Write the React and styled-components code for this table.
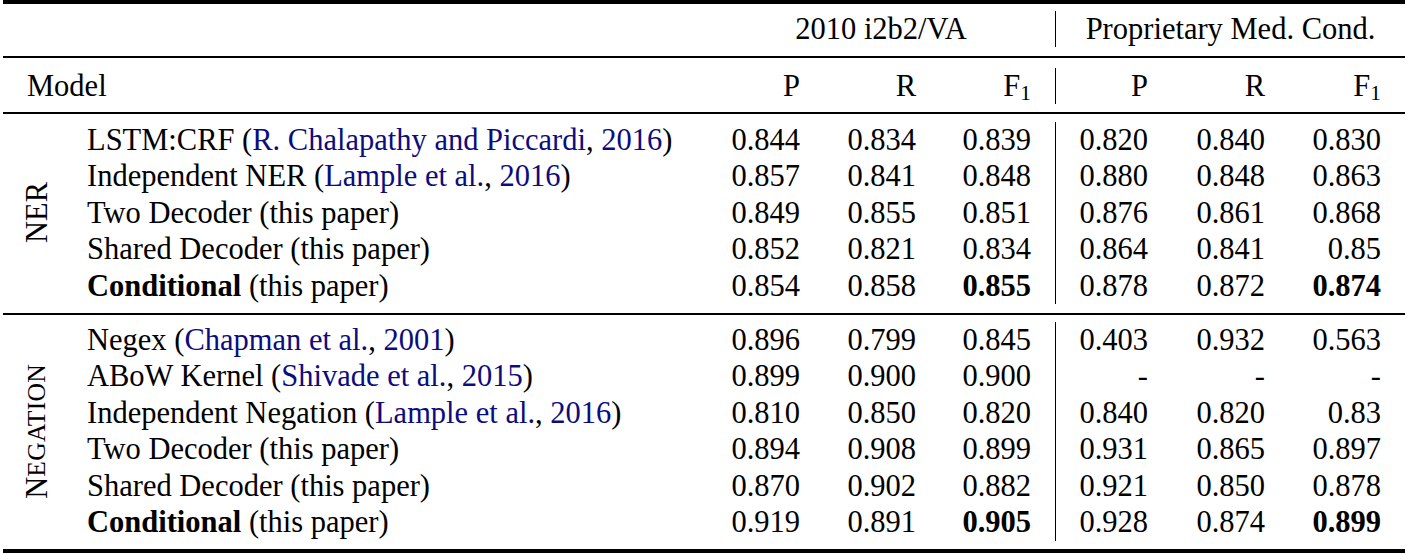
import React from 'react';
import styled, { createGlobalStyle } from 'styled-components';

const GlobalStyle = createGlobalStyle`
  html, body {
    margin: 0;
    padding: 0;
    background: #ffffff;
  }
  body {
    font-family: "Liberation Serif", "Times New Roman", serif;
    color: #000;
  }
`;

const COLUMNS = '84px 620px 117px 116px 115px 117px 117px 116px';

const Table = styled.div`
  width: 1402px;
  margin-left: 3px;
  border-top: 4px solid #000;
  font-size: 30.5px;
`;

const Section = styled.div`
  display: grid;
  grid-template-columns: ${COLUMNS};
  grid-auto-rows: ${(p) => p.$line || 36.5}px;
  line-height: ${(p) => p.$line || 36.5}px;
  padding-top: ${(p) => p.$top}px;
  padding-bottom: ${(p) => p.$bottom}px;
  border-bottom: ${(p) => p.$rule}px solid #000;
`;

const Cell = styled.div`
  white-space: nowrap;
  text-align: ${(p) => p.$align || 'right'};
  padding-right: ${(p) => (p.$align === 'left' ? 0 : 24)}px;
  padding-left: ${(p) => p.$indent || 0}px;
  font-weight: ${(p) => (p.$bold ? 700 : 400)};
  border-left: ${(p) => (p.$divider ? '1.5px solid #000' : 'none')};
  grid-column: ${(p) => p.$span || 'auto'};
`;

const SpanHead = styled.div`
  white-space: nowrap;
  text-align: center;
  padding: 0 24px;
  grid-column: ${(p) => p.$span};
  border-left: ${(p) => (p.$divider ? '1.5px solid #000' : 'none')};
`;

const GroupLabel = styled.div`
  grid-column: 1;
  grid-row: 1 / span ${(p) => p.$rows};
  align-self: center;
  justify-self: start;
  margin-left: 16px;
  writing-mode: vertical-rl;
  transform: rotate(180deg);
  line-height: 36.5px;
  white-space: nowrap;
`;

const SmallCaps = styled.span`
  font-size: 0.84em;
  text-transform: uppercase;
  letter-spacing: 0.01em;
`;

const ModelName = styled.div`
  grid-column: 2;
  white-space: nowrap;
`;

const Bold = styled.span`
  font-weight: 700;
`;

const Cite = styled.span`
  color: #0c0c7e;
`;

const Sub = styled.sub`
  font-size: 0.7em;
  line-height: 0;
  vertical-align: -0.2em;
`;

const F1 = () => (
  <>
    F<Sub>1</Sub>
  </>
);

const NER = [
  { model: 'LSTM:CRF', cite: ['R. Chalapathy and Piccardi', '2016'], v: ['0.844', '0.834', '0.839', '0.820', '0.840', '0.830'] },
  { model: 'Independent NER', cite: ['Lample et al.', '2016'], v: ['0.857', '0.841', '0.848', '0.880', '0.848', '0.863'] },
  { model: 'Two Decoder', v: ['0.849', '0.855', '0.851', '0.876', '0.861', '0.868'] },
  { model: 'Shared Decoder', v: ['0.852', '0.821', '0.834', '0.864', '0.841', '0.85'] },
  { model: 'Conditional', strong: true, v: ['0.854', '0.858', '0.855', '0.878', '0.872', '0.874'], best: [2, 5] },
];

const NEGATION = [
  { model: 'Negex', cite: ['Chapman et al.', '2001'], v: ['0.896', '0.799', '0.845', '0.403', '0.932', '0.563'] },
  { model: 'ABoW Kernel', cite: ['Shivade et al.', '2015'], v: ['0.899', '0.900', '0.900', '-', '-', '-'] },
  { model: 'Independent Negation', cite: ['Lample et al.', '2016'], v: ['0.810', '0.850', '0.820', '0.840', '0.820', '0.83'] },
  { model: 'Two Decoder', v: ['0.894', '0.908', '0.899', '0.931', '0.865', '0.897'] },
  { model: 'Shared Decoder', v: ['0.870', '0.902', '0.882', '0.921', '0.850', '0.878'] },
  { model: 'Conditional', strong: true, v: ['0.919', '0.891', '0.905', '0.928', '0.874', '0.899'], best: [2, 5] },
];

const RowCells = ({ row }) => (
  <>
    <ModelName>
      {row.strong ? <Bold>{row.model}</Bold> : row.model} (
      {row.cite ? (
        <>
          <Cite>{row.cite[0]}</Cite>, <Cite>{row.cite[1]}</Cite>
        </>
      ) : (
        'this paper'
      )}
      )
    </ModelName>
    {row.v.map((val, i) => (
      <Cell key={i} $divider={i === 3} $bold={row.best && row.best.includes(i)}>
        {val}
      </Cell>
    ))}
  </>
);

const Group = ({ label, rows, top, bottom, rule, line }) => (
  <Section $top={top} $bottom={bottom} $rule={rule} $line={line}>
    <GroupLabel $rows={rows.length}>{label}</GroupLabel>
    {rows.map((row, i) => (
      <RowCells key={i} row={row} />
    ))}
  </Section>
);

export default function App() {
  return (
    <>
      <GlobalStyle />
      <Table>
        <Section $top={6.5} $bottom={9} $rule={2}>
          <SpanHead $span="3 / span 3">2010 i2b2/VA</SpanHead>
          <SpanHead $span="6 / span 3" $divider>
            Proprietary Med. Cond.
          </SpanHead>
        </Section>
        <Section $top={9.5} $bottom={8} $rule={2}>
          <Cell $align="left" $indent={24} $span="1 / span 2">
            Model
          </Cell>
          <Cell>P</Cell>
          <Cell>R</Cell>
          <Cell>
            <F1 />
          </Cell>
          <Cell $divider>P</Cell>
          <Cell>R</Cell>
          <Cell>
            <F1 />
          </Cell>
        </Section>
        <Group label="NER" rows={NER} top={7.5} bottom={9} rule={2} />
        <Group
          label={
            <>
              N<SmallCaps>egation</SmallCaps>
            </>
          }
          rows={NEGATION}
          top={6.5}
          bottom={8}
          rule={4}
          line={36.6}
        />
      </Table>
    </>
  );
}
